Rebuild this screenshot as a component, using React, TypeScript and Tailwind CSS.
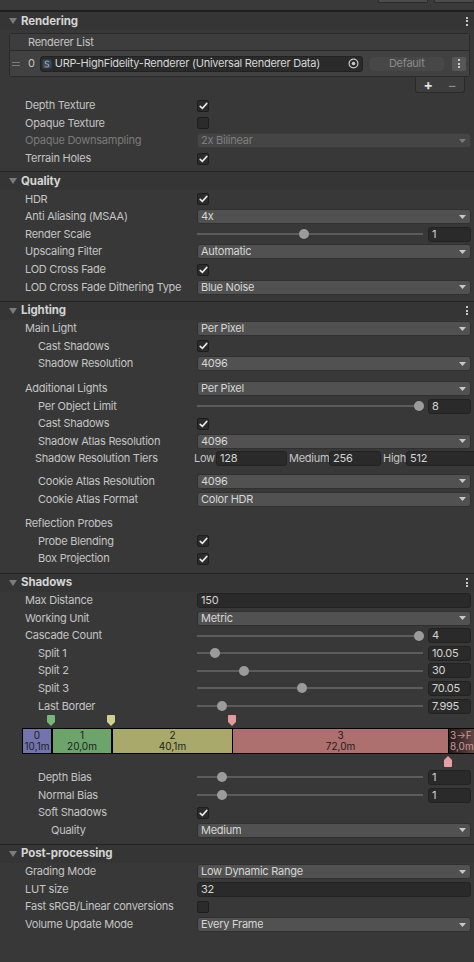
import type { ReactNode } from 'react'

const indents = ['pl-[25px]', 'pl-[38px]', 'pl-[51px]']

function Kebab({ className = '' }: { className?: string }) {
  return (
    <div className={`flex flex-col items-center gap-[1.5px] ${className}`}>
      <span className="block h-[2px] w-[2px] bg-[#c8c8c8]" />
      <span className="block h-[2px] w-[2px] bg-[#c8c8c8]" />
      <span className="block h-[2px] w-[2px] bg-[#c8c8c8]" />
    </div>
  )
}

function Header({ title, kebab }: { title: string; kebab?: boolean }) {
  return (
    <div className="flex h-[18px] items-center bg-[#353535] pl-[9px] pr-[6px]">
      <svg width="8" height="6" viewBox="0 0 8 6" className="mr-[4px]">
        <path d="M0 0H8L4 6Z" fill="#7c7c7c" />
      </svg>
      <span className="text-[11.5px] font-bold tracking-[-0.1px] text-[#d4d4d4]">{title}</span>
      {kebab && <Kebab className="ml-auto" />}
    </div>
  )
}

function Section({ title, kebab, pb = 'pb-[5px]', children }: { title: string; kebab?: boolean; pb?: string; children: ReactNode }) {
  return (
    <div className="border-t border-[#232323]">
      <Header title={title} kebab={kebab} />
      <div className={pb}>{children}</div>
    </div>
  )
}

function Row({ label, indent = 0, disabled, children }: { label: string; indent?: number; disabled?: boolean; children?: ReactNode }) {
  return (
    <div className="flex h-[17.6px] items-center">
      <div className={`w-[197px] shrink-0 truncate ${indents[indent]} ${disabled ? 'text-[#7a7a7a]' : 'text-[#c4c4c4]'}`}>
        {label}
      </div>
      <div className="flex min-w-0 flex-1 items-center pr-[3px]">{children}</div>
    </div>
  )
}

function Checkbox({ checked }: { checked?: boolean }) {
  return (
    <div className="flex h-[12px] w-[12px] items-center justify-center rounded-[2px] border border-[#1d1d1d] bg-[#2b2b2b]">
      {checked && (
        <svg width="9" height="8" viewBox="0 0 9 8">
          <path d="M1.2 4.3L3.4 6.3L7.8 1.4" stroke="#e8e8e8" strokeWidth="1.6" fill="none" strokeLinecap="round" />
        </svg>
      )}
    </div>
  )
}

function Dropdown({ value, disabled }: { value: string; disabled?: boolean }) {
  return (
    <div
      className={`flex h-[15px] flex-1 items-center justify-between rounded-[3px] border pl-[3px] pr-[4px] ${
        disabled ? 'border-[#3b3b3b] bg-[#454545] text-[#7f7f7f]' : 'border-[#303030] bg-[#515151] text-[#d6d6d6]'
      }`}
    >
      <span className="truncate">{value}</span>
      <svg width="7" height="4" viewBox="0 0 7 4">
        <path d="M0 0H7L3.5 4Z" fill={disabled ? '#7a7a7a' : '#c8c8c8'} />
      </svg>
    </div>
  )
}

function Field({ value, className = 'flex-1' }: { value: string; className?: string }) {
  return (
    <div className={`flex h-[15px] items-center rounded-[3px] border border-[#222222] bg-[#2a2a2a] pl-[3px] text-[#d4d4d4] ${className}`}>
      {value}
    </div>
  )
}

function Slider({ pos, value }: { pos: number; value: string }) {
  return (
    <>
      <div className="relative h-[15px] flex-1">
        <div className="absolute left-0 right-0 top-[6.5px] h-[2px] bg-[#5c5c5c]" />
        <div
          className="absolute top-[2.5px] h-[10px] w-[10px] -translate-x-1/2 rounded-full bg-[#9b9b9b]"
          style={{ left: `${pos}px` }}
        />
      </div>
      <Field value={value} className="ml-[5px] w-[43px]" />
    </>
  )
}

function Marker({ color, up, left, top }: { color: string; up?: boolean; left: string; top: string }) {
  return (
    <svg width="8" height="11" viewBox="0 0 8 11" className={`absolute ${left} ${top} ${up ? 'rotate-180' : ''}`}>
      <path d="M1 0H7Q8 0 8 1V7L4 11L0 7V1Q0 0 1 0Z" fill={color} />
    </svg>
  )
}

const cascades = [
  { w: 'w-[28px]', bg: 'bg-[#7373ad]', idx: '0', dist: '10,1m', border: '' },
  { w: 'w-[60px]', bg: 'bg-[#6ca46c]', idx: '1', dist: '20,0m', border: 'border-l-2' },
  { w: 'w-[121px]', bg: 'bg-[#a9a96b]', idx: '2', dist: '40,1m', border: 'border-l-2' },
  { w: 'w-[216px]', bg: 'bg-[#ae6f6f]', idx: '3', dist: '72,0m', border: 'border-l' },
]

function CascadeBar() {
  return (
    <div className="relative h-[53.8px] pt-[13px]">
      <Marker color="#78b678" left="left-[47px]" top="top-0" />
      <Marker color="#d0d08e" left="left-[107px]" top="top-0" />
      <Marker color="#e29a9a" left="left-[228px]" top="top-0" />
      <div className="ml-[22px] flex h-[26px] border-y border-l border-black text-[10px] leading-[11px] tracking-normal text-[#1e1e1e]">
        {cascades.map((c) => (
          <div key={c.idx} className={`flex shrink-0 flex-col items-center justify-center border-black ${c.w} ${c.bg} ${c.border}`}>
            <span>{c.idx}</span>
            <span>{c.dist}</span>
          </div>
        ))}
        <div className="flex w-[40px] shrink-0 flex-col justify-center border-l border-black bg-gradient-to-r from-[#231a1a] to-[#8f5f5f] pl-[1px] text-[#c49a9a]">
          <span>3→F</span>
          <span>8,0m</span>
        </div>
      </div>
      <Marker color="#e6a0a0" up left="left-[444px]" top="top-[41px]" />
    </div>
  )
}

function RendererList() {
  return (
    <div className="mt-[3px]">
      <div className="ml-[9px] mr-[4px] rounded-[3px] border border-[#2a2a2a]">
        <div className="flex h-[17px] items-center border-b border-[#2a2a2a] bg-[#3d3d3d] pl-[18px] text-[#c4c4c4]">
          Renderer List
        </div>
        <div className="flex h-[25px] items-center bg-[#414141] pl-[2px]">
          <div className="flex w-[8px] flex-col gap-[2px]">
            <span className="block h-[1px] bg-[#7a7a7a]" />
            <span className="block h-[1px] bg-[#7a7a7a]" />
          </div>
          <span className="ml-[8px] text-[#c4c4c4]">0</span>
          <div className="ml-[5px] flex h-[16px] w-[323px] items-center rounded-[3px] border border-[#222222] bg-[#2a2a2a] pl-[1px] pr-[3px]">
            <svg width="10" height="10" viewBox="0 0 10 10" className="shrink-0">
              <rect x="0.5" y="0.5" width="9" height="9" rx="1.5" fill="#34495a" />
              <path d="M6.8 3.2Q6.5 2 5 2Q3.2 2 3.2 3.5Q3.2 4.8 5 5Q6.8 5.2 6.8 6.5Q6.8 8 5 8Q3.5 8 3.2 6.8" stroke="#8fa3b3" strokeWidth="1.1" fill="none" />
              <circle cx="3" cy="7.6" r="1" fill="#b84a46" />
            </svg>
            <span className="ml-[3px] truncate text-[#d6d6d6]">URP-HighFidelity-Renderer (Universal Renderer Data)</span>
            <svg width="11" height="11" viewBox="0 0 11 11" className="ml-auto shrink-0">
              <circle cx="5.5" cy="5.5" r="4.4" stroke="#c8c8c8" strokeWidth="1.2" fill="none" />
              <circle cx="5.5" cy="5.5" r="1.8" fill="#c8c8c8" />
            </svg>
          </div>
          <div className="ml-[7px] flex h-[14px] w-[74px] items-center justify-center rounded-[3px] bg-[#474747] text-[#8c8c8c]">
            Default
          </div>
          <div className="ml-[8px] flex h-[14px] w-[14px] items-center justify-center rounded-[2px] bg-[#575757]">
            <Kebab />
          </div>
        </div>
      </div>
      <div className="flex justify-end pr-[9px]">
        <div className="flex h-[16px] w-[50px] items-center justify-around rounded-b-[3px] border-x border-b border-[#2a2a2a] bg-[#3d3d3d] text-[14px] leading-none">
          <span className="font-bold text-[#e0e0e0]">+</span>
          <span className="text-[#8c8c8c]">−</span>
        </div>
      </div>
    </div>
  )
}

export default function App() {
  return (
    <div className="h-[962px] w-[474px] overflow-hidden bg-[#383838] font-['Inter','Noto_Sans',sans-serif] text-[11px] leading-[13px] tracking-[-0.25px]">
      <div className="flex h-[10px] items-start justify-end gap-[6px] bg-[#3a3a3a]">
        <div className="h-[3px] w-[50px] rounded-b-[2px] border-x border-b border-[#2a2a2a] bg-[#4c4c4c]" />
        <div className="h-[3px] w-[40px] rounded-b-[2px] border-x border-b border-[#2a2a2a] bg-[#4c4c4c]" />
      </div>
      <div className="h-[2px] bg-[#1f1f1f]" />

      <div>
        <Header title="Rendering" kebab />
        <div className="pb-[4px]">
          <RendererList />
          <div className="mt-[4px]">
            <Row label="Depth Texture"><Checkbox checked /></Row>
            <Row label="Opaque Texture"><Checkbox /></Row>
            <Row label="Opaque Downsampling" disabled><Dropdown value="2x Bilinear" disabled /></Row>
            <Row label="Terrain Holes"><Checkbox checked /></Row>
          </div>
        </div>
      </div>

      <Section title="Quality">
        <Row label="HDR"><Checkbox checked /></Row>
        <Row label="Anti Aliasing (MSAA)"><Dropdown value="4x" /></Row>
        <Row label="Render Scale"><Slider pos={107} value="1" /></Row>
        <Row label="Upscaling Filter"><Dropdown value="Automatic" /></Row>
        <Row label="LOD Cross Fade"><Checkbox checked /></Row>
        <Row label="LOD Cross Fade Dithering Type"><Dropdown value="Blue Noise" /></Row>
      </Section>

      <Section title="Lighting" kebab>
        <Row label="Main Light"><Dropdown value="Per Pixel" /></Row>
        <Row label="Cast Shadows" indent={1}><Checkbox checked /></Row>
        <Row label="Shadow Resolution" indent={1}><Dropdown value="4096" /></Row>
        <div className="mt-[7px]">
          <Row label="Additional Lights"><Dropdown value="Per Pixel" /></Row>
          <Row label="Per Object Limit" indent={1}><Slider pos={222} value="8" /></Row>
          <Row label="Cast Shadows" indent={1}><Checkbox checked /></Row>
          <Row label="Shadow Atlas Resolution" indent={1}><Dropdown value="4096" /></Row>
          <div className="flex h-[17.6px] items-center text-[#c4c4c4]">
            <div className="w-[194px] shrink-0 pl-[35px]">Shadow Resolution Tiers</div>
            <span className="w-[22px] shrink-0">Low</span>
            <Field value="128" className="w-[71px] shrink-0" />
            <span className="ml-[2px] w-[40px] shrink-0">Medium</span>
            <Field value="256" className="w-[52px] shrink-0" />
            <span className="ml-[2px] w-[23px] shrink-0">High</span>
            <Field value="512" className="w-[72px] shrink-0" />
          </div>
        </div>
        <div className="mt-[5px]">
          <Row label="Cookie Atlas Resolution" indent={1}><Dropdown value="4096" /></Row>
          <Row label="Cookie Atlas Format" indent={1}><Dropdown value="Color HDR" /></Row>
        </div>
        <div className="mt-[7px]">
          <Row label="Reflection Probes" />
          <Row label="Probe Blending" indent={1}><Checkbox checked /></Row>
          <Row label="Box Projection" indent={1}><Checkbox checked /></Row>
        </div>
      </Section>

      <Section title="Shadows" kebab>
        <Row label="Max Distance"><Field value="150" /></Row>
        <Row label="Working Unit"><Dropdown value="Metric" /></Row>
        <Row label="Cascade Count"><Slider pos={222} value="4" /></Row>
        <Row label="Split 1" indent={1}><Slider pos={18} value="10.05" /></Row>
        <Row label="Split 2" indent={1}><Slider pos={47} value="30" /></Row>
        <Row label="Split 3" indent={1}><Slider pos={105} value="70.05" /></Row>
        <Row label="Last Border" indent={1}><Slider pos={25} value="7.995" /></Row>
        <CascadeBar />
        <Row label="Depth Bias" indent={1}><Slider pos={25} value="1" /></Row>
        <Row label="Normal Bias" indent={1}><Slider pos={25} value="1" /></Row>
        <Row label="Soft Shadows" indent={1}><Checkbox checked /></Row>
        <Row label="Quality" indent={2}><Dropdown value="Medium" /></Row>
      </Section>

      <Section title="Post-processing">
        <Row label="Grading Mode"><Dropdown value="Low Dynamic Range" /></Row>
        <Row label="LUT size"><Field value="32" /></Row>
        <Row label="Fast sRGB/Linear conversions"><Checkbox /></Row>
        <Row label="Volume Update Mode"><Dropdown value="Every Frame" /></Row>
      </Section>
    </div>
  )
}
